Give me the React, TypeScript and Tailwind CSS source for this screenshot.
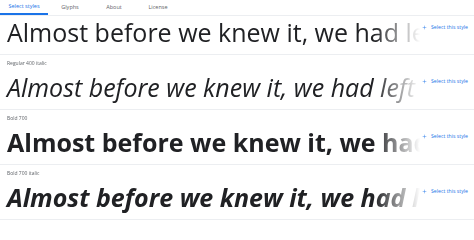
import { Plus } from 'lucide-react';

const SAMPLE = 'Almost before we knew it, we had left the ground.';

const styles = [
  { label: '', weight: 'font-normal', italic: false },
  { label: 'Regular 400 italic', weight: 'font-normal', italic: true },
  { label: 'Bold 700', weight: 'font-bold', italic: false },
  { label: 'Bold 700 italic', weight: 'font-bold', italic: true },
];

const SelectButton = ({ top }: { top: string }) => (
  <div className={`w-[54px] shrink-0 ${top}`}>
    <button className="flex items-center gap-[4px] text-[#1a73e8] text-[5.2px] leading-[8px] pl-[2px]">
      <Plus size={5} strokeWidth={2} />
      <span>Select this style</span>
    </button>
  </div>
);

const App = () => {
  return (
    <div className="w-[474px] h-[221px] overflow-hidden bg-white font-['Open_Sans',sans-serif] text-[#202124]">
      <div className="flex h-[16px] border-b border-[#eceef1] text-[5.5px] text-[#5f6368]">
        <div className="w-[48px] flex items-center justify-center text-[#1a73e8] border-b-2 border-[#1a73e8]">
          Select styles
        </div>
        <div className="w-[44px] flex items-center justify-center">Glyphs</div>
        <div className="w-[44px] flex items-center justify-center">About</div>
        <div className="w-[44px] flex items-center justify-center">License</div>
      </div>

      {styles.map((s, i) => (
        <div key={i} className="flex border-b border-[#eceef1]">
          <div
            className={`w-[420px] shrink-0 overflow-hidden pl-[7px] ${
              i === 0 ? 'pt-[4px]' : 'pt-[4px]'
            } pb-[9px] [mask-image:linear-gradient(to_right,black_89%,transparent_100%)]`}
          >
            {s.label && (
              <div className="h-[8px] text-[5px] leading-[8px] text-[#5f6368]">{s.label}</div>
            )}
            <div
              className={`whitespace-nowrap text-[25px] leading-[25px] ${s.weight} ${
                s.italic ? 'italic' : ''
              } ${i === 0 ? '' : 'mt-[8px]'}`}
            >
              {SAMPLE}
            </div>
          </div>
          <SelectButton top={i === 0 ? 'pt-[7px]' : 'pt-[22px]'} />
        </div>
      ))}
    </div>
  );
};

export default App;
